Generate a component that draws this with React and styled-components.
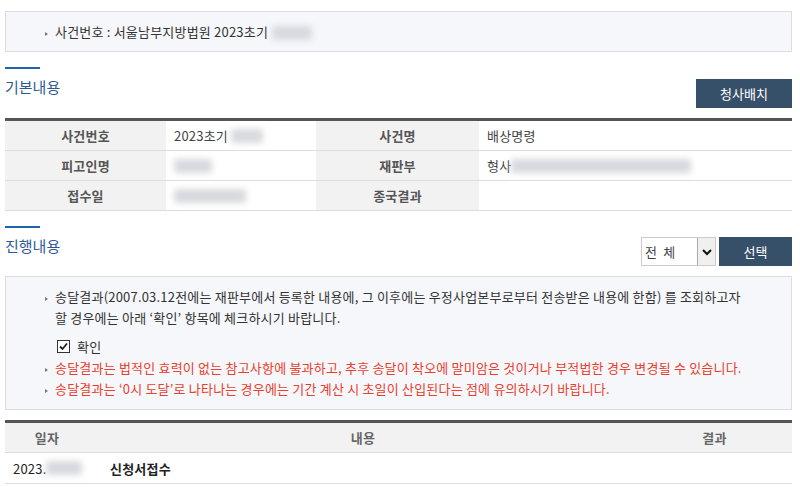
import React from 'react';
import styled, { createGlobalStyle } from 'styled-components';

const Global = createGlobalStyle`
  body {
    margin: 0;
    background: #fff;
    font-family: "Noto Sans CJK KR", "Noto Sans", sans-serif;
    color: #333;
  }
`;

const Page = styled.div`
  padding: 11px 8px 0 5px;
  font-size: 13px;
  letter-spacing: 0.2px;
`;

const InfoBox = styled.div`
  background: #f6f7fb;
  border: 1px solid #dcdde2;
  padding: ${p => p.$pad || '9px 0 9px 38px'};
  margin-top: ${p => p.$mt || 0}px;
`;

const Line = styled.div`
  position: relative;
  padding-left: 11px;
  line-height: 21px;
  color: ${p => (p.$red ? '#e8402b' : '#333')};
  &::before {
    content: '';
    position: absolute;
    left: 1px;
    top: 11px;
    width: 0;
    height: 0;
    border-left: 3px solid #777;
    border-top: 2px solid transparent;
    border-bottom: 2px solid transparent;
  }
`;

const Blur = styled.span`
  display: inline-block;
  vertical-align: middle;
  width: ${p => p.$w}px;
  height: 14px;
  background: #d8d9de;
  filter: blur(3px);
  margin-left: ${p => p.$ml || 0}px;
  border-radius: 3px;
`;

const SectionHead = styled.div`
  display: flex;
  justify-content: space-between;
  align-items: flex-start;
  margin-top: ${p => p.$mt}px;
`;

const Title = styled.h2`
  margin: 0;
  font-size: 15px;
  font-weight: 400;
  color: #2d5a94;
  letter-spacing: 0;
  line-height: 20px;
  padding-top: 10px;
  position: relative;
  &::before {
    content: '';
    position: absolute;
    left: 0;
    top: 0;
    width: 35px;
    height: 2px;
    background: #1f63ae;
  }
`;

const Controls = styled.div`
  display: flex;
  gap: 3px;
  margin-top: ${p => p.$mt}px;
`;

const DarkButton = styled.button`
  border: 0;
  background: #37506a;
  color: #fff;
  font-family: inherit;
  font-size: 13px;
  width: ${p => p.$w}px;
  height: 29px;
  padding: 0;
  cursor: pointer;
`;

const Select = styled.div`
  width: 75px;
  height: 29px;
  box-sizing: border-box;
  border: 1px solid #ccc;
  display: flex;
  align-items: center;
  justify-content: space-between;
  font-size: 13px;
  color: #444;
  padding-left: 3px;
  background: #fff;
  word-spacing: 3px;
`;

const Arrow = styled.span`
  width: 18px;
  height: 27px;
  box-sizing: border-box;
  border-left: 1px solid #aaa;
  background: #f0f0f0;
  display: flex;
  align-items: center;
  justify-content: center;
`;

const InfoTable = styled.div`
  display: grid;
  grid-template-columns: 161px 150px 163px 1fr;
  border-top: 3px solid #555;
  margin-top: 10px;
`;

const Cell = styled.div`
  height: 30px;
  box-sizing: border-box;
  border-bottom: 1px solid #ddd;
  display: flex;
  align-items: center;
  justify-content: ${p => (p.$th ? 'center' : 'flex-start')};
  padding-left: ${p => (p.$th ? 0 : 8)}px;
  background: ${p => (p.$th ? '#f2f2f2' : '#fff')};
  font-weight: ${p => (p.$th ? 700 : 400)};
  color: ${p => (p.$th ? '#555' : '#444')};
`;

const Check = styled.label`
  display: flex;
  align-items: center;
  gap: 7px;
  margin: 8px 0 0 13px;
  line-height: 21px;
`;

const Box = styled.span`
  width: 11px;
  height: 11px;
  border: 1px solid #333;
  background: #fff;
  display: flex;
  align-items: center;
  justify-content: center;
`;

const ListTable = styled.div`
  display: grid;
  grid-template-columns: 84px 548px 1fr;
  border-top: 3px solid #555;
  margin-top: 10px;
`;

const HeadCell = styled.div`
  height: 30px;
  box-sizing: border-box;
  border-bottom: 1px solid #ddd;
  background: #f2f2f2;
  display: flex;
  align-items: center;
  justify-content: center;
  font-weight: 700;
  color: #666;
`;

const BodyCell = styled.div`
  height: 31px;
  box-sizing: border-box;
  border-bottom: 1px solid #ddd;
  display: flex;
  align-items: center;
  padding-left: ${p => p.$pl}px;
  color: #222;
  font-weight: ${p => (p.$bold ? 700 : 400)};
`;

export default function App() {
  return (
    <Page>
      <Global />
      <InfoBox>
        <Line>사건번호 : 서울남부지방법원 2023초기<Blur $w={40} $ml={4} /></Line>
      </InfoBox>

      <SectionHead $mt={15}>
        <Title>기본내용</Title>
        <Controls $mt={12}>
          <DarkButton $w={96}>청사배치</DarkButton>
        </Controls>
      </SectionHead>

      <InfoTable>
        <Cell $th>사건번호</Cell>
        <Cell>2023초기<Blur $w={32} $ml={3} /></Cell>
        <Cell $th>사건명</Cell>
        <Cell>배상명령</Cell>
        <Cell $th>피고인명</Cell>
        <Cell><Blur $w={38} /></Cell>
        <Cell $th>재판부</Cell>
        <Cell>형사<Blur $w={180} /></Cell>
        <Cell $th>접수일</Cell>
        <Cell><Blur $w={72} /></Cell>
        <Cell $th>종국결과</Cell>
        <Cell></Cell>
      </InfoTable>

      <SectionHead $mt={15}>
        <Title>진행내용</Title>
        <Controls $mt={11}>
          <Select>
            전 체
            <Arrow>
              <svg width="10" height="8" viewBox="0 0 10 8">
                <path d="M1 2 L5 6 L9 2" fill="none" stroke="#111" strokeWidth="2" />
              </svg>
            </Arrow>
          </Select>
          <DarkButton $w={73}>선택</DarkButton>
        </Controls>
      </SectionHead>

      <InfoBox $pad="9px 0 10px 38px" $mt={10}>
        <Line>
          송달결과(2007.03.12전에는 재판부에서 등록한 내용에, 그 이후에는 우정사업본부로부터 전송받은 내용에 한함) 를 조회하고자
          <br />할 경우에는 아래 ‘확인’ 항목에 체크하시기 바랍니다.
        </Line>
        <Check>
          <Box>
            <svg width="9" height="9" viewBox="0 0 9 9">
              <path d="M1 4.5 L3.5 7 L8 1.5" fill="none" stroke="#222" strokeWidth="1.8" />
            </svg>
          </Box>
          확인
        </Check>
        <Line $red>송달결과는 법적인 효력이 없는 참고사항에 불과하고, 추후 송달이 착오에 말미암은 것이거나 부적법한 경우 변경될 수 있습니다.</Line>
        <Line $red>송달결과는 ‘0시 도달’로 나타나는 경우에는 기간 계산 시 초일이 산입된다는 점에 유의하시기 바랍니다.</Line>
      </InfoBox>

      <ListTable>
        <HeadCell>일자</HeadCell>
        <HeadCell>내용</HeadCell>
        <HeadCell>결과</HeadCell>
        <BodyCell $pl={8}>2023.<Blur $w={36} /></BodyCell>
        <BodyCell $pl={21} $bold>신청서접수</BodyCell>
        <BodyCell $pl={0}></BodyCell>
      </ListTable>
    </Page>
  );
}
